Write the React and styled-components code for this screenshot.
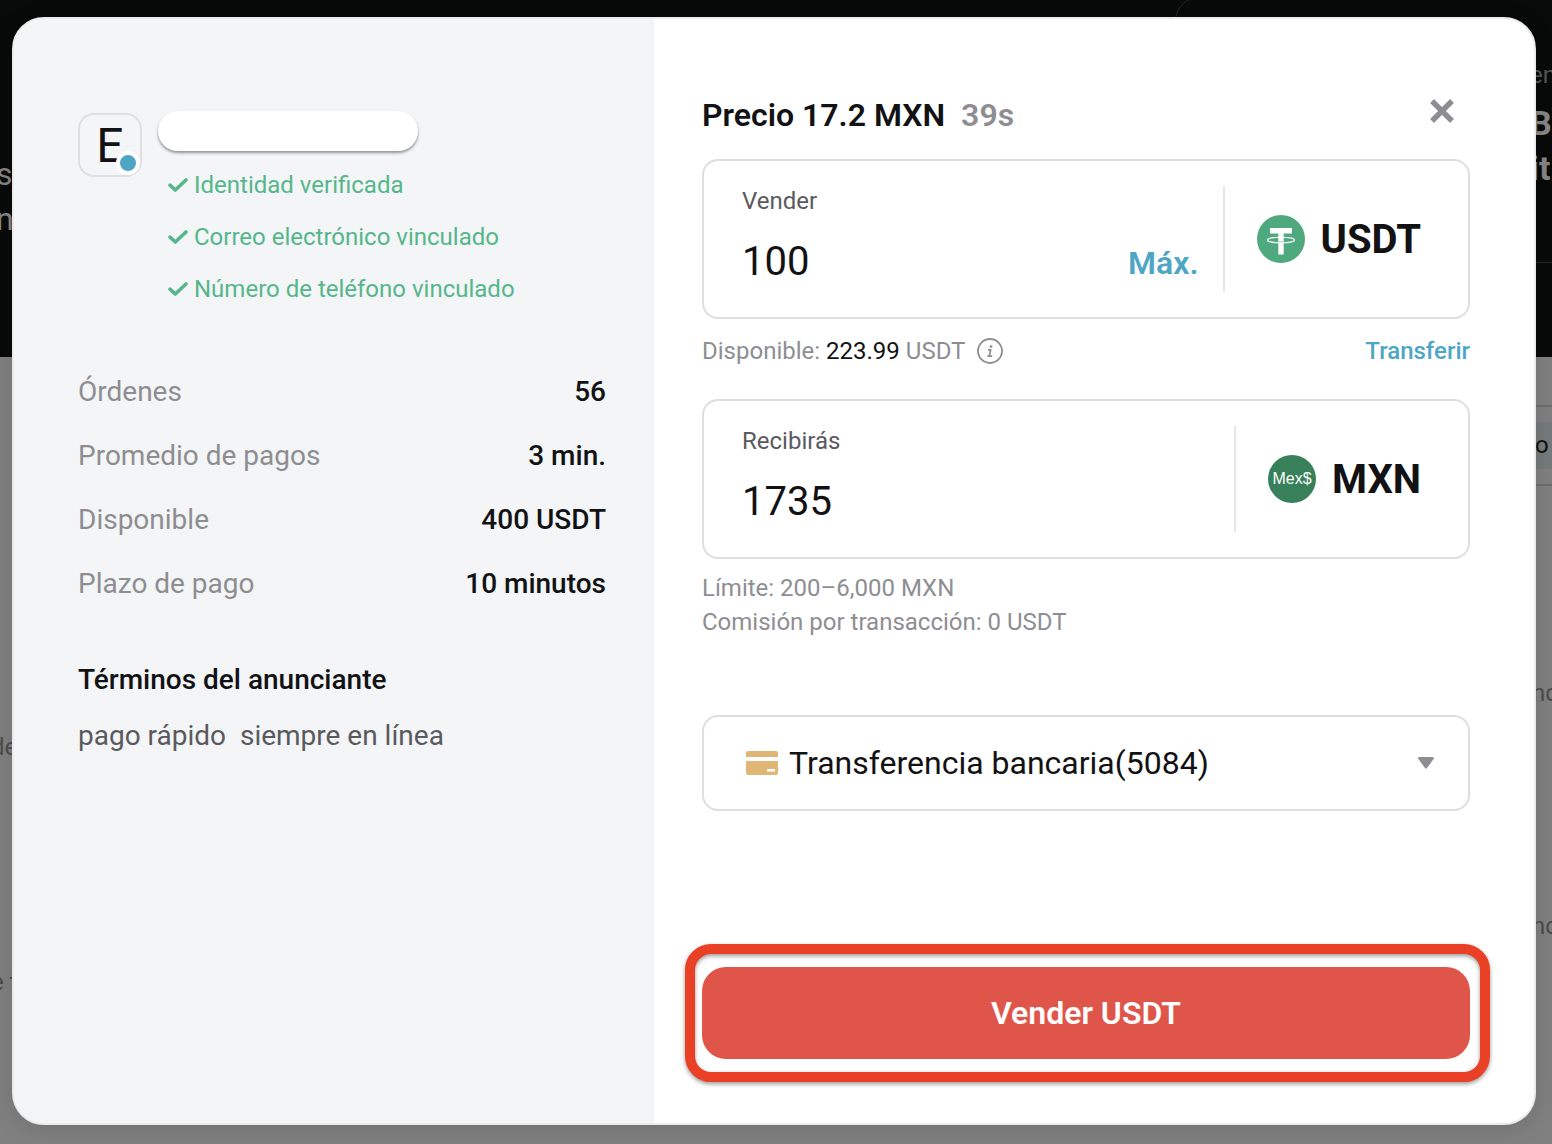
import React, { useState } from "react";
import styled, { createGlobalStyle } from "styled-components";

const GlobalStyle = createGlobalStyle`
  * {
    box-sizing: border-box;
  }
  body {
    margin: 0;
    background: #808080;
    color: #121214;
    font-family: Roboto, "Liberation Sans", sans-serif;
  }
  button, input, select {
    font-family: inherit;
    color: inherit;
  }
`;

const StyledPage = styled.div`
  position: relative;
  min-height: 100vh;
  padding: 17px 16px 19px 12px;
  overflow: hidden;
`;

/* dimmed page that stays behind the dialog */
const StyledBackdrop = styled.div`
  position: absolute;
  inset: 0;
  overflow: hidden;
`;

const StyledHero = styled.div`
  display: flex;
  justify-content: space-between;
  height: 357px;
  background: #080909;
  color: #858585;
  font-size: 32px;
  line-height: 45px;
`;

const StyledHeroText = styled.div`
  margin-left: -4px;
  padding-top: 152px;
`;

const StyledHeroCard = styled.div`
  display: flex;
  flex-direction: column;
  align-items: flex-end;
  width: 378px;
  height: 266px;
  margin: -3px -1px 0 0;
  padding-top: 51px;
  border: 1px solid #262626;
  border-radius: 24px 0 0 24px;
  font-size: 34px;
  font-weight: 700;
`;

const StyledHeroLine = styled.div`
  width: 22px;
  white-space: nowrap;
`;

const StyledHeroHint = styled(StyledHeroLine)`
  color: #555;
  font-size: 24px;
  font-weight: 400;
  line-height: 52px;
`;

const StyledListing = styled.div`
  display: flex;
  justify-content: space-between;
  color: #4c4c4c;
  font-size: 24px;
`;

const StyledListingLeft = styled.div`
  margin-left: -9px;
  padding-top: 273px;
  line-height: 235px;
`;

const StyledListingRight = styled.div`
  width: 20px;
  padding-top: 48px;
  line-height: 233px;
  white-space: nowrap;
`;

const StyledFilter = styled.div`
  padding: 15px 0;
  border: solid #6e6e6e;
  border-width: 2px 0;
  color: #121214;
  line-height: 47px;

  span {
    display: block;
    padding-left: 3px;
    background: #757a7b;
  }
`;

const StyledListingItems = styled.div`
  padding-top: 91px;
`;

const StyledDialog = styled.main`
  position: relative;
  display: grid;
  grid-template-columns: minmax(0, 8fr) minmax(0, 11fr);
  min-height: calc(100vh - 36px);
  border: 2px solid #ebebec;
  border-radius: 32px;
  background: #fff;
  box-shadow: 0 4px 24px rgba(0, 0, 0, 0.12);
`;

const StyledSeller = styled.section`
  padding: 92px 48px 64px 64px;
  border-radius: 30px 0 0 30px;
  background: #f3f5f7;
`;

const StyledProfile = styled.div`
  display: flex;
  gap: 16px;
`;

const StyledAvatar = styled.div`
  position: relative;
  flex: none;
  width: 64px;
  height: 64px;
  margin-top: 2px;
  border: 2px solid #dedfe1;
  border-radius: 16px;
  font-size: 48px;
  line-height: 62px;
  text-align: center;
`;

const StyledOnline = styled.span`
  position: absolute;
  right: 0;
  bottom: 0;
  width: 24px;
  height: 24px;
  border: 4px solid #fff;
  border-radius: 50%;
  background: #4ea6c5;
`;

const StyledName = styled.div`
  width: 260px;
  height: 40px;
  border-radius: 20px;
  background: #fff;
  box-shadow: 0 2px 3px rgba(0, 0, 0, 0.4);
`;

const StyledChecks = styled.ul`
  margin: 8px 0 0;
  padding: 0 0 0 10px;
  list-style: none;
  color: #56b68b;
  font-size: 24px;
  line-height: 52px;

  li {
    display: flex;
    align-items: center;
    gap: 6px;
  }
  svg {
    flex: none;
  }
`;

const StyledStats = styled.dl`
  margin: 45px 0 32px;
  font-size: 28px;
  line-height: 64px;

  div {
    display: flex;
    justify-content: space-between;
  }
  dt {
    color: #8e8e92;
  }
  dd {
    margin: 0;
    font-weight: 500;
  }
`;

const StyledTermsTitle = styled.h2`
  margin: 0;
  font-size: 28px;
  font-weight: 500;
  line-height: 64px;
`;

const StyledTerms = styled.p`
  margin: 0;
  color: #5a5a5e;
  font-size: 28px;
  line-height: 48px;
  white-space: pre-wrap;
`;

const StyledOrder = styled.form`
  display: flex;
  flex-direction: column;
  padding: 64px 64px 64px 48px;
`;

const StyledHeader = styled.header`
  display: flex;
  justify-content: space-between;
  margin-bottom: 12px;
`;

const StyledPrice = styled.h1`
  display: flex;
  gap: 16px;
  margin: 0;
  font-size: 32px;
  font-weight: 600;
  line-height: 64px;

  span {
    color: #8e8e92;
  }
`;

const StyledClose = styled.button`
  display: flex;
  align-items: center;
  justify-content: center;
  width: 56px;
  height: 56px;
  padding: 0;
  border: 0;
  background: none;
  cursor: pointer;
`;

const StyledField = styled.div`
  display: flex;
  align-items: center;
  height: 160px;
  padding: 0 47px 0 38px;
  border: 2px solid #dedede;
  border-radius: 16px;
`;

const StyledFieldMain = styled.div`
  flex: 1;
  min-width: 0;
  padding-bottom: 4px;

  label {
    display: block;
    color: #5a5a5e;
    font-size: 24px;
    line-height: 36px;
  }
`;

const StyledFieldRow = styled.div`
  display: flex;
  align-items: center;
  padding-top: 12px;
`;

const StyledAmount = styled.input`
  flex: 1;
  min-width: 0;
  height: 60px;
  padding: 0;
  border: 0;
  outline: 0;
  background: none;
  font-size: 40px;
`;

const StyledMax = styled.button`
  padding: 4px 0 0;
  border: 0;
  background: none;
  color: #4ea6c5;
  font-size: 32px;
  font-weight: 600;
  cursor: pointer;
`;

const StyledCurrency = styled.div`
  display: flex;
  align-items: center;
  gap: 16px;
  height: 106px;
  margin-left: 24px;
  padding-left: 32px;
  border-left: 2px solid #e6e6e6;
  font-size: 40px;
  font-weight: 700;
`;

const StyledCoin = styled.span`
  display: flex;
  align-items: center;
  justify-content: center;
  width: 48px;
  height: 48px;
  border-radius: 50%;
  background: #37805a;
  color: #fff;
  font-family: "Liberation Sans", Arial, sans-serif;
  font-size: 16px;
  font-weight: 400;
`;

const StyledBalance = styled.div`
  display: flex;
  align-items: center;
  justify-content: space-between;
  margin-bottom: 16px;
  color: #8e8e92;
  font-size: 24px;
  line-height: 64px;

  span {
    display: flex;
    align-items: center;
    gap: 6px;
  }
  b {
    color: #121214;
    font-weight: 400;
  }
  svg {
    margin-left: 6px;
  }
  a {
    color: #4ea6c5;
    font-weight: 500;
    text-decoration: none;
  }
`;

const StyledNotes = styled.div`
  margin: 12px 0 76px;
  color: #8e8e92;
  font-size: 24px;
  line-height: 34px;
`;

const StyledPayment = styled.label`
  display: flex;
  align-items: center;
  gap: 11px;
  height: 96px;
  padding: 0 34px 0 42px;
  border: 2px solid #dedede;
  border-radius: 16px;

  select {
    flex: 1;
    min-width: 0;
    height: 64px;
    padding: 0;
    border: 0;
    outline: 0;
    appearance: none;
    background: none;
    font-size: 32px;
  }
`;

const StyledSubmit = styled.button`
  position: relative;
  height: 92px;
  margin-top: auto;
  border: 0;
  border-radius: 24px;
  background: #df5549;
  color: #fff;
  font-size: 32px;
  font-weight: 600;
  cursor: pointer;

  /* highlight ring around the main action */
  &::after {
    content: "";
    position: absolute;
    inset: -23px -20px -23px -17px;
    border: 10px solid #ea4025;
    border-radius: 26px;
    filter: drop-shadow(0 2px 2px rgba(0, 0, 0, 0.4));
  }
`;

const CheckIcon = () => (
  <svg width="20" height="16" viewBox="0 0 20 16" fill="none" aria-hidden="true">
    <path
      d="M2 8.2 7.3 13 18 3"
      stroke="currentColor"
      strokeWidth="3.6"
      strokeLinecap="round"
      strokeLinejoin="round"
    />
  </svg>
);

const CloseIcon = () => (
  <svg width="24" height="24" viewBox="0 0 24 24" aria-hidden="true">
    <path d="M2 2 22 22M22 2 2 22" stroke="#8e8e92" strokeWidth="5.4" />
  </svg>
);

const TetherIcon = () => (
  <svg width="48" height="48" viewBox="0 0 48 48" fill="none" aria-hidden="true">
    <circle cx="24" cy="24" r="24" fill="#4fa97e" />
    <path d="M13 13h22v5.400h-8.300v21h-5.400v-21H13z" fill="#fff" />
    <ellipse cx="24" cy="25" rx="13.600" ry="2.800" stroke="#fff" strokeWidth="1.100" />
    <path d="M21.300 26.800h5.400" stroke="#4fa97e" strokeWidth="0.500" />
  </svg>
);

const InfoIcon = () => (
  <svg width="26" height="26" viewBox="0 0 26 26" fill="none" aria-hidden="true">
    <circle cx="13" cy="13" r="12" stroke="#8e8e92" strokeWidth="1.800" />
    <circle cx="14" cy="8.600" r="1.400" fill="#8e8e92" />
    <path
      d="M11 11.800h2.600l-1.200 6.200M10.400 18.200h4.800"
      stroke="#8e8e92"
      strokeWidth="1.700"
    />
  </svg>
);

const CardIcon = () => (
  <svg width="32" height="24" viewBox="0 0 32 24" aria-hidden="true">
    <path d="M2 0h28a2 2 0 0 1 2 2v4H0V2a2 2 0 0 1 2-2z" fill="#e0b674" />
    <path d="M0 10h32v12a2 2 0 0 1-2 2H2a2 2 0 0 1-2-2z" fill="#e0b674" />
    <path d="M21 18h8v2.500h-8z" fill="#fff" />
  </svg>
);

const CaretIcon = () => (
  <svg width="16" height="12" viewBox="0 0 16 12" aria-hidden="true">
    <path
      d="M1.500 0h13a1.300 1.300 0 0 1 1.100 2.100L9 11a1.300 1.300 0 0 1-2 0L.4 2.100A1.300 1.300 0 0 1 1.500 0z"
      fill="#8e8e92"
    />
  </svg>
);

const checks = [
  "Identidad verificada",
  "Correo electrónico vinculado",
  "Número de teléfono vinculado",
];

const stats = [
  ["Órdenes", "56"],
  ["Promedio de pagos", "3 min."],
  ["Disponible", "400 USDT"],
  ["Plazo de pago", "10 minutos"],
];

const Backdrop = () => (
  <StyledBackdrop aria-hidden="true">
    <StyledHero>
      <StyledHeroText>
        <div>se</div>
        <div>n</div>
      </StyledHeroText>
      <StyledHeroCard>
        <StyledHeroHint>en</StyledHeroHint>
        <StyledHeroLine>Bi</StyledHeroLine>
        <StyledHeroLine>it</StyledHeroLine>
      </StyledHeroCard>
    </StyledHero>
    <StyledListing>
      <StyledListingLeft>
        <div>de</div>
        <div>e t</div>
      </StyledListingLeft>
      <StyledListingRight>
        <StyledFilter>
          <span>o</span>
        </StyledFilter>
        <StyledListingItems>
          <div>nc</div>
          <div>nc</div>
        </StyledListingItems>
      </StyledListingRight>
    </StyledListing>
  </StyledBackdrop>
);

const Seller = () => (
  <StyledSeller>
    <StyledProfile>
      <StyledAvatar>
        E
        <StyledOnline />
      </StyledAvatar>
      <div>
        <StyledName />
        <StyledChecks>
          {checks.map((text) => (
            <li key={text}>
              <CheckIcon />
              {text}
            </li>
          ))}
        </StyledChecks>
      </div>
    </StyledProfile>
    <StyledStats>
      {stats.map(([label, value]) => (
        <div key={label}>
          <dt>{label}</dt>
          <dd>{value}</dd>
        </div>
      ))}
    </StyledStats>
    <StyledTermsTitle>Términos del anunciante</StyledTermsTitle>
    <StyledTerms>{"pago rápido  siempre en línea"}</StyledTerms>
  </StyledSeller>
);

const Order = () => {
  const [sell, setSell] = useState("100");
  const [receive, setReceive] = useState("1735");

  return (
    <StyledOrder onSubmit={(e) => e.preventDefault()}>
      <StyledHeader>
        <StyledPrice>
          Precio 17.2 MXN <span>39s</span>
        </StyledPrice>
        <StyledClose type="button" aria-label="Cerrar">
          <CloseIcon />
        </StyledClose>
      </StyledHeader>
      <StyledField>
        <StyledFieldMain>
          <label htmlFor="sell">Vender</label>
          <StyledFieldRow>
            <StyledAmount
              id="sell"
              value={sell}
              onChange={(e) => setSell(e.target.value)}
            />
            <StyledMax type="button" onClick={() => setSell("223.99")}>
              Máx.
            </StyledMax>
          </StyledFieldRow>
        </StyledFieldMain>
        <StyledCurrency>
          <TetherIcon />
          USDT
        </StyledCurrency>
      </StyledField>
      <StyledBalance>
        <span>
          Disponible: <b>223.99</b> USDT
          <InfoIcon />
        </span>
        <a href="#transferir">Transferir</a>
      </StyledBalance>
      <StyledField>
        <StyledFieldMain>
          <label htmlFor="receive">Recibirás</label>
          <StyledFieldRow>
            <StyledAmount
              id="receive"
              value={receive}
              onChange={(e) => setReceive(e.target.value)}
            />
          </StyledFieldRow>
        </StyledFieldMain>
        <StyledCurrency>
          <StyledCoin>Mex$</StyledCoin>
          MXN
        </StyledCurrency>
      </StyledField>
      <StyledNotes>
        <div>Límite: 200–6,000 MXN</div>
        <div>Comisión por transacción: 0 USDT</div>
      </StyledNotes>
      <StyledPayment>
        <CardIcon />
        <select aria-label="Método de pago">
          <option>Transferencia bancaria(5084)</option>
        </select>
        <CaretIcon />
      </StyledPayment>
      <StyledSubmit type="submit">Vender USDT</StyledSubmit>
    </StyledOrder>
  );
};

const App = () => (
  <StyledPage>
    <GlobalStyle />
    <Backdrop />
    <StyledDialog>
      <Seller />
      <Order />
    </StyledDialog>
  </StyledPage>
);

export default App;
